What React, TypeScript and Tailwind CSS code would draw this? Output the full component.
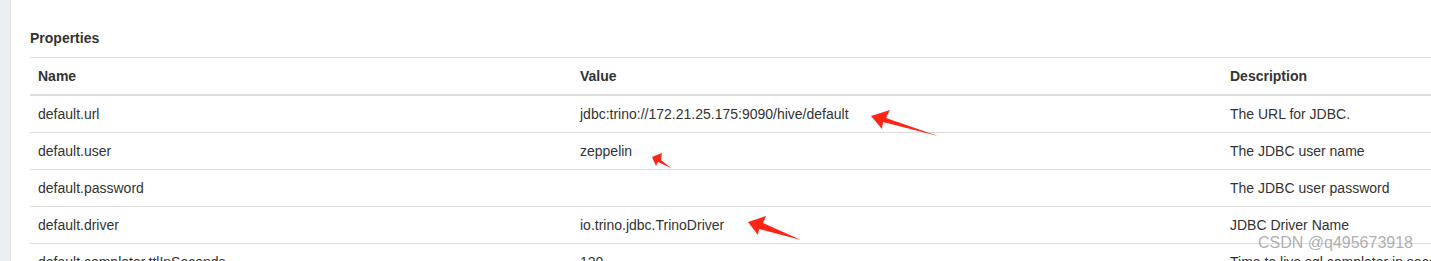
import React from "react";

interface Property {
  name: string;
  value: string;
  description: string;
}

const properties: Property[] = [
  { name: "default.url", value: "jdbc:trino://172.21.25.175:9090/hive/default", description: "The URL for JDBC." },
  { name: "default.user", value: "zeppelin", description: "The JDBC user name" },
  { name: "default.password", value: "", description: "The JDBC user password" },
  { name: "default.driver", value: "io.trino.jdbc.TrinoDriver", description: "JDBC Driver Name" },
  {
    name: "default.completer.ttlInSeconds",
    value: "120",
    description: "Time to live sql completer in seconds (-1 means do not cache)",
  },
];

// red annotation arrows drawn over the table
function Arrows() {
  return (
    <svg className="pointer-events-none absolute left-0 top-0" width={1431} height={261}>
      <polygon fill="#ff2414" points="871,116 890,110 886,118 938,136 883,122 882,129" />
      <polygon fill="#ff2414" points="652,157 662,153 661,160 671,168 658,162 656,166" />
      <polygon fill="#ff2414" points="748,222 766,216 763,223 801,240 759,229 758,235" />
    </svg>
  );
}

export default function App() {
  return (
    <div
      className="relative flex h-[261px] w-[1431px] overflow-hidden bg-white text-[14px] leading-[20px] text-[#333]"
      style={{ fontFamily: '"Liberation Sans", Arial, sans-serif' }}
    >
      <div className="w-[11px] shrink-0 border-r border-[#dfe3e5] bg-[#eceff1]" />
      <div className="shrink-0 pl-[19px] pt-[28px]">
        <h4 className="mb-[9px] font-bold">Properties</h4>
        <table className="w-[1500px] table-fixed border-collapse text-left">
          <colgroup>
            <col className="w-[542px]" />
            <col className="w-[650px]" />
            <col />
          </colgroup>
          <thead>
            <tr className="border-t border-[#ddd]">
              <th className="border-b-2 border-[#ddd] px-2 py-2 font-bold">Name</th>
              <th className="border-b-2 border-[#ddd] px-2 py-2 font-bold">Value</th>
              <th className="border-b-2 border-[#ddd] px-2 py-2 font-bold">Description</th>
            </tr>
          </thead>
          <tbody>
            {properties.map((p) => (
              <tr key={p.name} className="border-b border-[#ddd]">
                <td className="whitespace-nowrap px-2 py-2">{p.name}</td>
                <td className="whitespace-nowrap px-2 py-2">{p.value}</td>
                <td className="whitespace-nowrap px-2 py-2">{p.description}</td>
              </tr>
            ))}
          </tbody>
        </table>
      </div>
      <Arrows />
      <span className="pointer-events-none absolute left-[1258px] top-[233px] text-[16px] leading-[20px] text-[#9a9a9a]/80">
        CSDN @q495673918
      </span>
    </div>
  );
}
